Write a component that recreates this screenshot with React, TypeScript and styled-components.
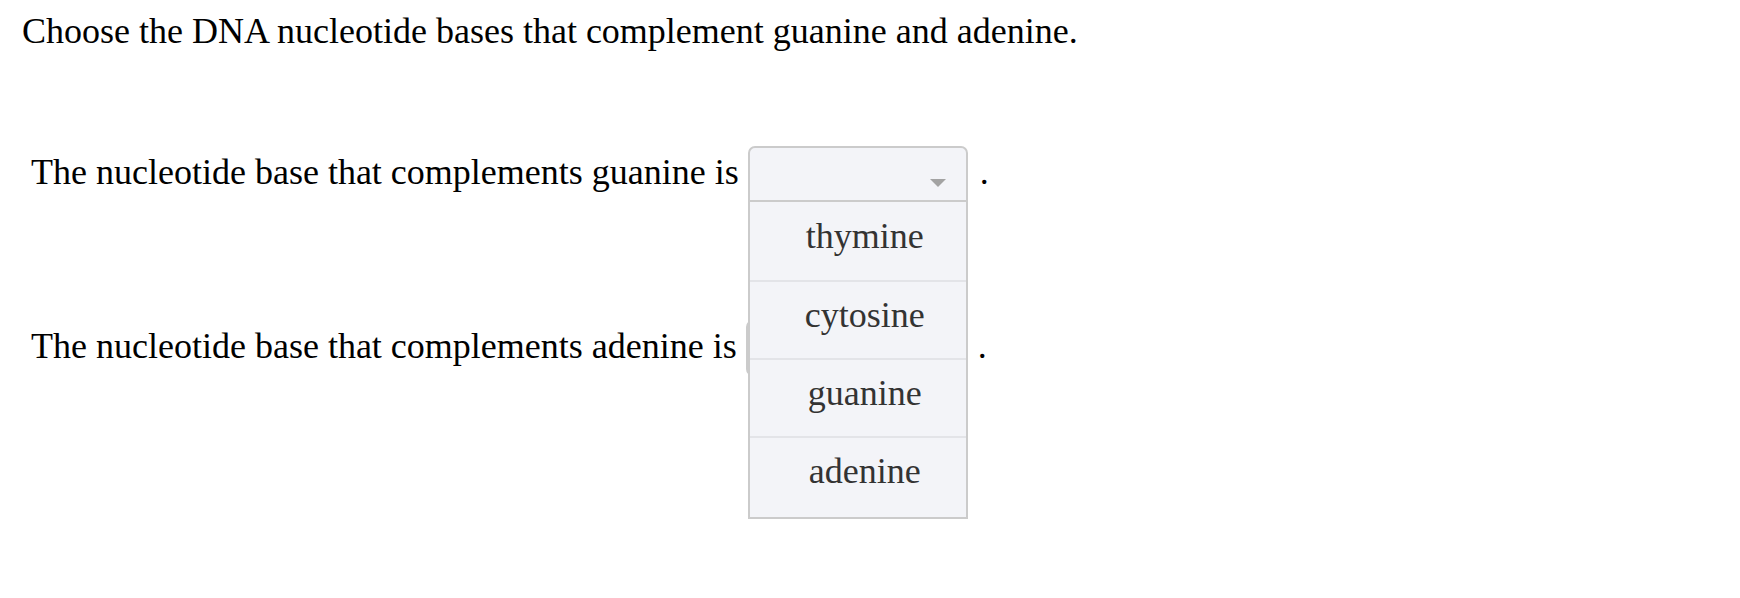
import { createGlobalStyle, styled } from 'styled-components';

const options = ['thymine', 'cytosine', 'guanine', 'adenine'];

export default function App() {
    return (
        <>
            <GlobalStyle />
            <Page>
                <Title>Choose the DNA nucleotide bases that complement guanine and adenine.</Title>
                <Rows>
                    <Row>
                        <Label>The nucleotide base that complements guanine is</Label>
                        <SelectWrap>
                            <SelectBox $open>
                                <Caret viewBox="0 0 16 8">
                                    <path d="M0 0 L16 0 L8 8 Z" />
                                </Caret>
                            </SelectBox>
                            <OptionList>
                                {options.map((o) => (
                                    <Option key={o}>{o}</Option>
                                ))}
                            </OptionList>
                        </SelectWrap>
                        <Period>.</Period>
                    </Row>
                    <Row>
                        <Label>The nucleotide base that complements adenine is</Label>
                        <SelectWrap>
                            <SelectBox>
                                <Caret viewBox="0 0 16 8">
                                    <path d="M0 0 L16 0 L8 8 Z" />
                                </Caret>
                            </SelectBox>
                        </SelectWrap>
                        <Period>.</Period>
                    </Row>
                </Rows>
            </Page>
        </>
    );
}

const GlobalStyle = createGlobalStyle`
    html, body, #root {
        min-height: 100%;
    }
    body {
        margin: 0;
        background: #ffffff;
        font-family: "Liberation Serif", "Times New Roman", serif;
        color: #000;
    }
`;

const Page = styled.div`
    min-height: 100vh;
    box-sizing: border-box;
    padding: 11px 0 0 22px;
    font-size: 36px;
`;

const Title = styled.div`
    line-height: 41px;
`;

const Rows = styled.div`
    display: flex;
    flex-direction: column;
    gap: 118px;
    margin-top: 94px;
    padding-left: 9px;
`;

const Row = styled.div`
    display: flex;
    align-items: center;
    height: 56px;
`;

const Label = styled.span`
    line-height: 41px;
    margin-top: -3px;
`;

const SelectWrap = styled.div`
    position: relative;
    margin-left: 9px;
    width: 220px;
    height: 56px;
`;

const SelectBox = styled.div<{ $open?: boolean }>`
    box-sizing: border-box;
    height: 100%;
    background: #f3f4f8;
    border: 2px solid #cbcbcb;
    border-radius: ${(p) => (p.$open ? '7px 7px 0 0' : '7px')};
    display: flex;
    align-items: flex-end;
    justify-content: flex-end;
    padding: 0 20px 13px 0;
`;

const Caret = styled.svg`
    width: 16px;
    height: 8px;
    fill: #a3a3a3;
`;

const OptionList = styled.div`
    position: absolute;
    top: 100%;
    left: 0;
    width: 220px;
    box-sizing: border-box;
    margin-top: -2px;
    padding-bottom: 3px;
    background: #f3f4f8;
    border: 2px solid #cbcbcb;
    z-index: 2;
`;

const Option = styled.div`
    height: 78px;
    box-sizing: border-box;
    display: flex;
    align-items: center;
    justify-content: center;
    padding: 0 0 10px 14px;
    color: #333;
    font-size: 36px;
    & + & {
        border-top: 2px solid #e3e4e8;
    }
`;

const Period = styled.span`
    line-height: 41px;
    margin-top: -3px;
    margin-left: 12px;
`;
